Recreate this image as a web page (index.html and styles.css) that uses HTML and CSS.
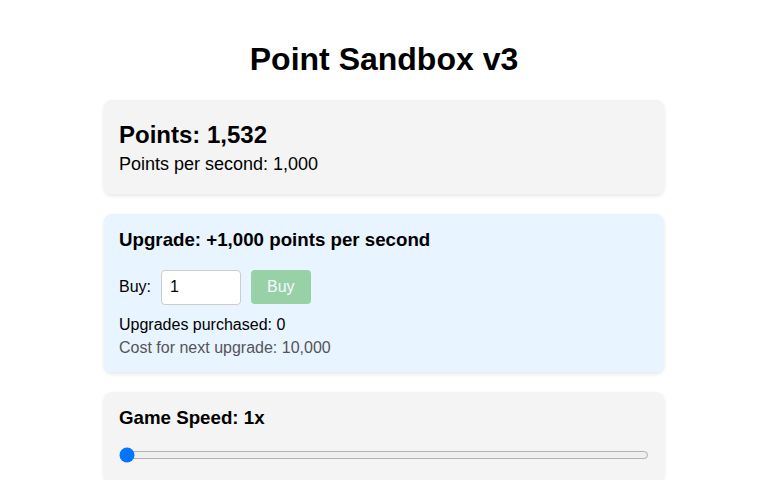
FILE: index.html
```html
<!DOCTYPE html>
<html lang="en">
<head>
  <meta charset="UTF-8">
  <meta name="viewport" content="width=device-width, initial-scale=1.0">
  <title>Point Sandbox v3</title>
  <link rel="stylesheet" href="styles.css">
</head>
<body>
  <h1>Point Sandbox v3</h1>
  <div class="card">
    <h2 id="points">Points: 1,532</h2>
    <p class="pps">Points per second: 1,000</p>
  </div>
  <div class="card upgrade">
    <h3>Upgrade: +1,000 points per second</h3>
    <div class="buyrow">
      <label for="buyamount">Buy:</label>
      <input type="number" id="buyamount" value="1" min="1">
      <button type="button" id="buybtn" disabled>Buy</button>
    </div>
    <p>Upgrades purchased: <span id="purchased">0</span></p>
    <p class="cost">Cost for next upgrade: <span id="cost">10,000</span></p>
  </div>
  <div class="card">
    <h3>Game Speed: <span id="speed">1</span>x</h3>
    <input type="range" id="speedrange" min="1" max="10" value="1">
  </div>
</body>
</html>
```

FILE: styles.css
```css
body{
  font-family: "Liberation Sans", Arial, sans-serif;
  max-width: 600px;
  margin: 0 auto;
  padding: 20px;
  box-sizing: border-box;
  color: #000;
}
h1{
  text-align: center;
  font-size: 32px;
}
.card{
  background-color: #f4f4f4;
  border-radius: 8px;
  padding: 15px;
  margin-bottom: 20px;
  box-shadow: 0 2px 4px rgba(0, 0, 0, .1);
}
.card > h2{
  font-size: 24px;
  margin: 6px 0 5px;
}
.pps{
  font-size: 18px;
  margin: 0 0 4px;
}
.upgrade{
  background-color: #e8f4ff;
}
.card > h3{
  margin-top: 0;
}
.buyrow{
  display: flex;
  align-items: center;
  gap: 10px;
  margin-bottom: 11px;
}
.buyrow > label{
  font-size: 16px;
}
.buyrow > input{
  width: 80px;
  padding: 8px;
  font-size: 16px;
  font-family: inherit;
  border: 1px solid #ccc;
  border-radius: 4px;
  box-sizing: border-box;
  height: 35px;
}
#buybtn{
  background-color: #4caf50;
  color: #fff;
  border: none;
  border-radius: 4px;
  padding: 8px 16px;
  font-size: 16px;
  font-family: inherit;
  height: 34px;
}
#buybtn:disabled{
  opacity: .5;
}
.upgrade > p{
  margin: 0 0 5px;
}
.upgrade > .cost{
  margin: 0;
  color: #555;
}
#speedrange{
  width: 100%;
  margin: 0;
}
```
